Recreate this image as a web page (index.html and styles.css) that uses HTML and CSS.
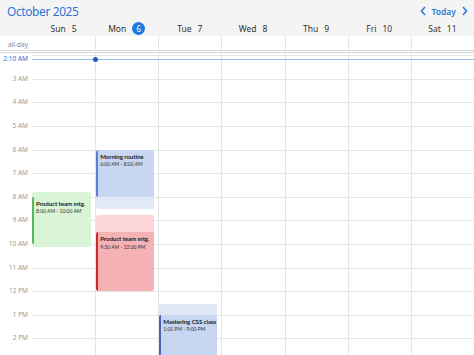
FILE: index.html
```html
<!DOCTYPE html>
<html>
<head>
<meta charset="utf-8">
<link rel="stylesheet" href="styles.css">
</head>
<body>
<div class="app">
  <div class="toolbar">
    <div class="title">October 2025</div>
    <div class="nav">
      <svg class="chev" width="7" height="10" viewBox="0 0 7 10"><path d="M5 1 L1.5 5 L5 9" fill="none" stroke="#2b74d6" stroke-width="1.5"/></svg>
      <span class="today">Today</span>
      <svg class="chev" width="7" height="10" viewBox="0 0 7 10"><path d="M2 1 L5.5 5 L2 9" fill="none" stroke="#2b74d6" stroke-width="1.5"/></svg>
    </div>
  </div>
  <div class="days">
    <div class="gut"></div>
    <div class="day">Sun<span class="num">5</span></div>
    <div class="day">Mon<span class="num badge">6</span></div>
    <div class="day">Tue<span class="num">7</span></div>
    <div class="day">Wed<span class="num">8</span></div>
    <div class="day">Thu<span class="num">9</span></div>
    <div class="day">Fri<span class="num">10</span></div>
    <div class="day">Sat<span class="num">11</span></div>
  </div>
  <div class="allday">
    <div class="gut-label">all-day</div>
    <div class="cell first"></div><div class="cell"></div><div class="cell"></div><div class="cell"></div><div class="cell"></div><div class="cell"></div><div class="cell"></div>
  </div>
  <div class="body">
    <div class="timeline">
      <div class="gutter">
        <div class="hour"></div>
        <div class="hour"></div>
        <div class="hour"></div>
        <div class="hour"><span>3 AM</span></div>
        <div class="hour"><span>4 AM</span></div>
        <div class="hour"><span>5 AM</span></div>
        <div class="hour"><span>6 AM</span></div>
        <div class="hour"><span>7 AM</span></div>
        <div class="hour"><span>8 AM</span></div>
        <div class="hour"><span>9 AM</span></div>
        <div class="hour"><span>10 AM</span></div>
        <div class="hour"><span>11 AM</span></div>
        <div class="hour"><span>12 PM</span></div>
        <div class="hour"><span>1 PM</span></div>
        <div class="hour"><span>2 PM</span></div>
        <div class="hour"></div>
      </div>
      <div class="col first">
        <div class="ev green" style="top:184.4px;height:55px">
          <div class="ev-main" style="margin-top:4.4px;height:47.2px">
            <div class="ev-title">Product team mtg.</div>
            <div class="ev-time">8:00 AM - 10:00 AM</div>
          </div>
        </div>
      </div>
      <div class="col">
        <div class="ev blue" style="top:141.6px;height:59.8px">
          <div class="ev-main" style="height:47.2px">
            <div class="ev-title">Morning routine</div>
            <div class="ev-time">6:00 AM - 8:00 AM</div>
          </div>
        </div>
        <div class="ev red" style="top:207.4px;height:75.8px">
          <div class="ev-main" style="margin-top:16.8px;height:59px">
            <div class="ev-title">Product team mtg.</div>
            <div class="ev-time">9:30 AM - 12:00 PM</div>
          </div>
        </div>
      </div>
      <div class="col">
        <div class="ev navy" style="top:296.4px;height:200px">
          <div class="ev-main" style="margin-top:10.4px;height:189px">
            <div class="ev-title">Mastering CSS class</div>
            <div class="ev-time">1:00 PM - 9:00 PM</div>
          </div>
        </div>
      </div>
      <div class="col"></div>
      <div class="col"></div>
      <div class="col"></div>
      <div class="col"></div>
      <div class="now" style="top:51px">
        <span class="now-label">2:10 AM</span>
        <span class="now-dot"></span>
      </div>
    </div>
  </div>
</div>
</body>
</html>
```
FILE: styles.css
```css
* { box-sizing: border-box; }
html, body { margin: 0; padding: 0; background: #fff; }
body { font-family: "Noto Sans", "Open Sans", sans-serif; color: #333; }
.app { width: 474px; height: 355px; overflow: hidden; display: flex; flex-direction: column; }

.toolbar {
  height: 21px; background: #f4f4f4; display: flex; align-items: center;
  justify-content: space-between; padding: 0 6px 0 7px;
}
.title { font-size: 11.9px; color: #2b74d6; letter-spacing: -0.35px; margin-top: 1px; }
.nav { display: flex; align-items: center; gap: 5px; color: #2b74d6; font-size: 8.5px; font-weight: 600; margin-top: 1px; }
.chev { display: block; }

.days {
  height: 15px; background: #f4f4f4; display: grid;
  grid-template-columns: 32px repeat(7, 1fr); align-items: center;
}
.day { text-align: center; font-size: 8.5px; color: #333; display: flex; justify-content: center; align-items: center; gap: 6px; }
.badge {
  display: inline-flex; width: 13px; height: 13px; border-radius: 50%;
  background: #1f7ae0; color: #fff; align-items: center; justify-content: center; font-size: 8px;
}

.allday {
  height: 17px; display: grid; grid-template-columns: 32px repeat(7, 1fr);
  border-bottom: 3px double #d4d4d4;
}
.gut-label { font-size: 6.5px; color: #8a8a8a; text-align: right; padding: 4px 4px 0 0; }
.allday .cell { border-left: 1px solid #e4e4e4; }
.allday .cell.first { border-left: none; }

.body { flex: 1; overflow: hidden; position: relative; }
.timeline {
  position: relative; margin-top: -45px;
  display: grid; grid-template-columns: 32px repeat(7, 1fr);
}
.gutter { display: flex; flex-direction: column; }
.hour { height: 23.6px; text-align: right; padding-right: 4px; font-size: 6.5px; color: #9a9a9a; line-height: 8px; }
.hour span { display: block; transform: translateY(-4px); }

.col {
  position: relative; border-left: 1px solid #e4e4e4;
  background: repeating-linear-gradient(to bottom, #e6e6e6 0 1px, transparent 1px 23.6px);
}
.col.first { border-left: none; }

.ev { position: absolute; left: 0; right: 4px; border-radius: 2px; overflow: hidden; }
.ev-main { border-left: 2px solid; padding: 3px 0 0 2px; border-radius: 2px; }
.ev-title { font-family: Lato, "Noto Sans", sans-serif; font-size: 6.2px; font-weight: 700; color: #1e1e1e; line-height: 8.5px; white-space: nowrap; letter-spacing: -0.1px; }
.ev-time { font-family: Lato, "Noto Sans", sans-serif; font-size: 5px; color: #333; line-height: 6.5px; white-space: nowrap; }

.green { background: #d9f4d7; }
.green .ev-main { border-left-color: #57b85a; background: #d9f4d7; }
.blue { background: #e3eaf7; }
.blue .ev-main { border-left-color: #5b7fd3; background: #c8d7f1; }
.red { background: #fcd6d6; }
.red .ev-main { border-left-color: #d0262e; background: #f5b2b4; }
.navy { background: #dfe7f6; }
.navy .ev-main { border-left-color: #4b66b0; background: #c8d7f1; }

.now {
  position: absolute; left: 32px; right: 0; height: 0; border-top: 1px solid #8dbcf2;
}
.now-label {
  position: absolute; left: -32px; width: 32px; text-align: right; padding-right: 4px;
  font-size: 6.5px; color: #2b74d6; line-height: 8px; top: -5px;
}
.now-dot {
  position: absolute; left: 61px; top: -3px; width: 5px; height: 5px; border-radius: 50%;
  background: #1e5cb8; z-index: 1;
}
```
